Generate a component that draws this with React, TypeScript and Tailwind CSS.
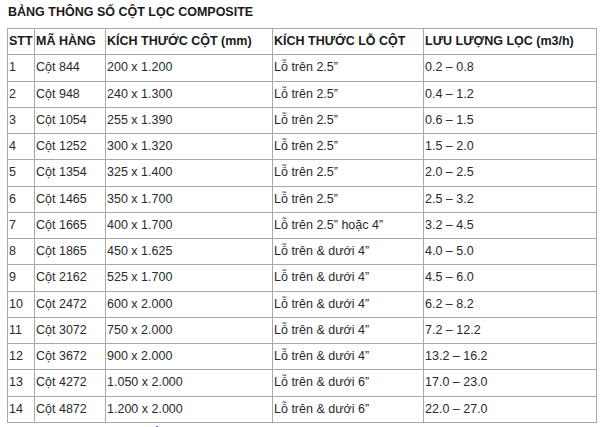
import React from "react";

const rows: [string, string, string, string, string][] = [
  ["1", "Cột 844", "200 x 1.200", "Lỗ trên 2.5”", "0.2 – 0.8"],
  ["2", "Cột 948", "240 x 1.300", "Lỗ trên 2.5”", "0.4 – 1.2"],
  ["3", "Cột 1054", "255 x 1.390", "Lỗ trên 2.5”", "0.6 – 1.5"],
  ["4", "Cột 1252", "300 x 1.320", "Lỗ trên 2.5”", "1.5 – 2.0"],
  ["5", "Cột 1354", "325 x 1.400", "Lỗ trên 2.5”", "2.0 – 2.5"],
  ["6", "Cột 1465", "350 x 1.700", "Lỗ trên 2.5”", "2.5 – 3.2"],
  ["7", "Cột 1665", "400 x 1.700", "Lỗ trên 2.5” hoặc 4”", "3.2 – 4.5"],
  ["8", "Cột 1865", "450 x 1.625", "Lỗ trên & dưới 4”", "4.0 – 5.0"],
  ["9", "Cột 2162", "525 x 1.700", "Lỗ trên & dưới 4”", "4.5 – 6.0"],
  ["10", "Cột 2472", "600 x 2.000", "Lỗ trên & dưới 4”", "6.2 – 8.2"],
  ["11", "Cột 3072", "750 x 2.000", "Lỗ trên & dưới 4”", "7.2 – 12.2"],
  ["12", "Cột 3672", "900 x 2.000", "Lỗ trên & dưới 4”", "13.2 – 16.2"],
  ["13", "Cột 4272", "1.050 x 2.000", "Lỗ trên & dưới 6”", "17.0 – 23.0"],
  ["14", "Cột 4872", "1.200 x 2.000", "Lỗ trên & dưới 6”", "22.0 – 27.0"],
];

const headers = ["STT", "MÃ HÀNG", "KÍCH THƯỚC CỘT (mm)", "KÍCH THƯỚC LỖ CỘT", "LƯU LƯỢNG LỌC (m3/h)"];

export default function App() {
  return (
    <div
      className="w-[600px] h-[427px] overflow-hidden bg-white text-[#222]"
      style={{ fontFamily: '"Liberation Sans", Arial, sans-serif' }}
    >
      <div className="pl-[8px] pt-[4px] h-[28px] text-[12.5px] font-bold leading-[16px] text-[#1a1a1a]">
        BẢNG THÔNG SỐ CỘT LỌC COMPOSITE
      </div>
      <table className="ml-[7px] border-collapse table-fixed w-[589px] text-[12.5px] leading-[15px]">
        <colgroup>
          <col className="w-[27px]" />
          <col className="w-[71px]" />
          <col className="w-[167px]" />
          <col className="w-[151px]" />
          <col className="w-[173px]" />
        </colgroup>
        <thead>
          <tr className="h-[26.25px]">
            {headers.map((h) => (
              <th
                key={h}
                className="border border-[#a9a9a9] px-[1px] text-left font-bold whitespace-nowrap text-[#1a1a1a]"
              >
                {h}
              </th>
            ))}
          </tr>
        </thead>
        <tbody>
          {rows.map((r) => (
            <tr key={r[0]} className="h-[26.25px]">
              {r.map((c, i) => (
                <td
                  key={i}
                  className="border border-[#a9a9a9] pl-[1px] pr-[1px] whitespace-nowrap text-[#2a2a2a]"
                >
                  {c}
                </td>
              ))}
            </tr>
          ))}
        </tbody>
      </table>
      <div className="pl-[40px] pt-[1px] text-[17px] font-bold leading-[20px] text-[#2b2fa8] whitespace-nowrap">
        Bảng thông số kỹ thuật cột lọc composite
      </div>
    </div>
  );
}
